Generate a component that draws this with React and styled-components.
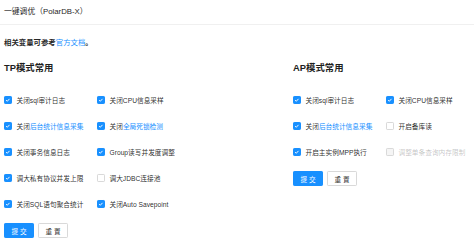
import React from "react";
import styled, { createGlobalStyle } from "styled-components";

const Global = createGlobalStyle`
  html, body { margin: 0; padding: 0; background: #fff; }
  body {
    font-family: "Liberation Sans", "Noto Sans CJK SC", sans-serif;
    color: rgba(0, 0, 0, 0.85);
  }
`;

const Page = styled.div`
  width: 474px;
  height: 248px;
  overflow: hidden;
`;

const Header = styled.div`
  height: 24px;
  line-height: 24px;
  padding: 0 4px;
  font-size: 7.8px;
  color: #262626;
  border-bottom: 1px solid #f0f0f0;
`;

const Content = styled.div`
  padding: 0 4px;
`;

const Note = styled.div`
  margin-top: 12px;
  line-height: 12px;
  font-size: 7.4px;
  font-weight: 600;
  color: #262626;
`;

const Link = styled.span`
  color: #1890ff;
  font-weight: 400;
`;

const Sections = styled.div`
  display: grid;
  grid-template-columns: 289px 1fr;
  margin-top: 12px;
`;

const Section = styled.section`
  display: flex;
  flex-direction: column;
`;

const Title = styled.h3`
  margin: 0 0 17px;
  height: 14px;
  line-height: 14px;
  font-size: 9.4px;
  font-weight: 700;
  color: #1f1f1f;
`;

const Grid = styled.div`
  display: grid;
  grid-template-columns: 93px 93px;
  row-gap: 10px;
`;

const Item = styled.label`
  display: flex;
  align-items: center;
  gap: 5px;
  height: 16px;
  font-size: 6.7px;
  white-space: nowrap;
  color: ${(p) => (p.$disabled ? "rgba(0,0,0,0.25)" : "rgba(0,0,0,0.85)")};
`;

const Box = styled.span`
  box-sizing: border-box;
  width: 7.5px;
  height: 7.5px;
  flex: none;
  border-radius: 1.2px;
  display: flex;
  align-items: center;
  justify-content: center;
  background: ${(p) => (p.$checked ? "#1890ff" : p.$disabled ? "#f5f5f5" : "#fff")};
  border: 0.8px solid ${(p) => (p.$checked ? "#1890ff" : "#d9d9d9")};
`;

const Hl = styled.span`
  color: #1890ff;
`;

const Buttons = styled.div`
  display: flex;
  gap: 4px;
  margin-top: 11px;
`;

const Button = styled.button`
  box-sizing: border-box;
  width: 30px;
  height: 15px;
  padding: 0;
  font-family: inherit;
  font-size: 6.6px;
  border-radius: 1.2px;
  cursor: pointer;
  border: 0.8px solid ${(p) => (p.$primary ? "#1890ff" : "#d9d9d9")};
  background: ${(p) => (p.$primary ? "#1890ff" : "#fff")};
  color: ${(p) => (p.$primary ? "#fff" : "rgba(0,0,0,0.85)")};
`;

const Check = () => (
  <svg width="6" height="6" viewBox="0 0 10 10">
    <path d="M2 5.2 L4.2 7.3 L8.2 2.9" fill="none" stroke="#fff" strokeWidth="1.7" />
  </svg>
);

const CheckItem = ({ checked, disabled, children }) => (
  <Item $disabled={disabled}>
    <Box $checked={checked} $disabled={disabled}>{checked && <Check />}</Box>
    <span>{children}</span>
  </Item>
);

const tp = [
  { c: true, t: "关闭sql审计日志" },
  { c: true, t: "关闭CPU信息采样" },
  { c: true, t: <>关闭<Hl>后台统计信息采集</Hl></> },
  { c: true, t: <>关闭<Hl>全局死锁检测</Hl></> },
  { c: true, t: "关闭事务信息日志" },
  { c: true, t: "Group读写并发度调整" },
  { c: true, t: "调大私有协议并发上限" },
  { c: false, t: "调大JDBC连接池" },
  { c: true, t: "关闭SQL语句聚合统计" },
  { c: true, t: "关闭Auto Savepoint" },
];

const ap = [
  { c: true, t: "关闭sql审计日志" },
  { c: true, t: "关闭CPU信息采样" },
  { c: true, t: <>关闭<Hl>后台统计信息采集</Hl></> },
  { c: false, t: "开启备库读" },
  { c: true, t: "开启主实例MPP执行" },
  { c: false, d: true, t: "调整单条查询内存限制" },
];

const Block = ({ title, items }) => (
  <Section>
    <Title>{title}</Title>
    <Grid>
      {items.map((it, i) => (
        <CheckItem key={i} checked={it.c} disabled={it.d}>{it.t}</CheckItem>
      ))}
    </Grid>
    <Buttons>
      <Button $primary>提 交</Button>
      <Button>重 置</Button>
    </Buttons>
  </Section>
);

export default function App() {
  return (
    <Page>
      <Global />
      <Header>一键调优（PolarDB-X）</Header>
      <Content>
        <Note>相关变量可参考<Link>官方文档</Link>。</Note>
        <Sections>
          <Block title="TP模式常用" items={tp} />
          <Block title="AP模式常用" items={ap} />
        </Sections>
      </Content>
    </Page>
  );
}
